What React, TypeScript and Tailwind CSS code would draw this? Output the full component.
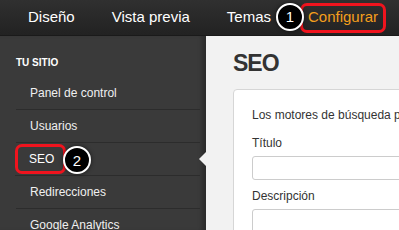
import React from 'react';

const font = { fontFamily: '"Liberation Sans", Arial, sans-serif' };

const navItems = ['Diseño', 'Vista previa', 'Temas'];
const sideItems = ['Panel de control', 'Usuarios', 'SEO', 'Redirecciones', 'Google Analytics'];

function Step({ n, className }: { n: number; className: string }) {
  return (
    <span
      className={`absolute flex h-[28px] w-[28px] items-center justify-center rounded-full border-2 border-white bg-black text-[15px] leading-none text-white shadow-[0_0_4px_rgba(0,0,0,0.6)] ${className}`}
    >
      {n}
    </span>
  );
}

export default function App() {
  return (
    <div className="h-[230px] w-[399px] overflow-hidden bg-[#3a3a3a]" style={font}>
      <header className="flex h-[36px] items-center gap-[37px] border-b border-[#1a1a1a] bg-gradient-to-b from-[#303030] to-[#222222] pl-[28px] text-[15px] text-white">
        {navItems.map((item) => (
          <span key={item}>{item}</span>
        ))}
        <span className="relative -ml-[8px] inline-flex h-[30px] items-center rounded-[7px] border-[3px] border-[#f0141e] px-[5px] text-[#f59f1c]">
          Configurar
          <Step n={1} className="-top-[3px] -left-[27px]" />
        </span>
      </header>

      <div className="flex h-[194px]">
        <aside className="w-[206px] shrink-0 bg-[#3a3a3a] shadow-[inset_-6px_0_4px_-2px_rgba(0,0,0,0.25)]">
          <div className="flex h-[41px] items-center pt-[11px] pl-[16px] text-[10px] font-bold text-white">
            TU SITIO
          </div>
          {sideItems.map((item) =>
            item === 'SEO' ? (
              <div key={item} className="relative ml-[15px] mr-[6px] flex h-[33px] items-center border-b border-[#2c2c2c] text-[12px] text-white">
                <span className="relative flex h-[30px] items-center rounded-[7px] border-[3px] border-[#f0141e] pr-[9px] pl-[11px]">
                  SEO
                  <Step n={2} className="-top-[1px] left-[45px]" />
                </span>
                <span className="absolute top-[9px] -right-[6px] h-0 w-0 border-y-[7px] border-r-[7px] border-y-transparent border-r-[#f2f2f2]" />
              </div>
            ) : (
              <div key={item} className="ml-[16px] mr-[6px] flex h-[33px] items-center border-b border-[#2c2c2c] pl-[14px] text-[12px] text-[#f0f0f0]">
                {item}
              </div>
            ),
          )}
        </aside>

        <main className="flex-1 bg-[#f2f2f2] pl-[27px]">
          <h1 className="mt-[13px] text-[23px] font-bold leading-[28px] tracking-[-1px] text-[#333333]">SEO</h1>
          <div className="mt-[12px] w-[420px] rounded-[4px] border border-[#d6d6d6] bg-white pt-[18px] pl-[18px] text-[12px] text-[#333333]">
            <p className="whitespace-nowrap leading-[14px]">Los motores de búsqueda pueden mostrar</p>
            <p className="mt-[14px] leading-[14px]">Título</p>
            <div className="mt-[6px] h-[24px] rounded-[3px] border border-[#cccccc] bg-white" />
            <p className="mt-[9px] leading-[14px]">Descripción</p>
            <div className="mt-[6px] h-[50px] rounded-[3px] border border-[#cccccc] bg-white" />
          </div>
        </main>
      </div>
    </div>
  );
}
